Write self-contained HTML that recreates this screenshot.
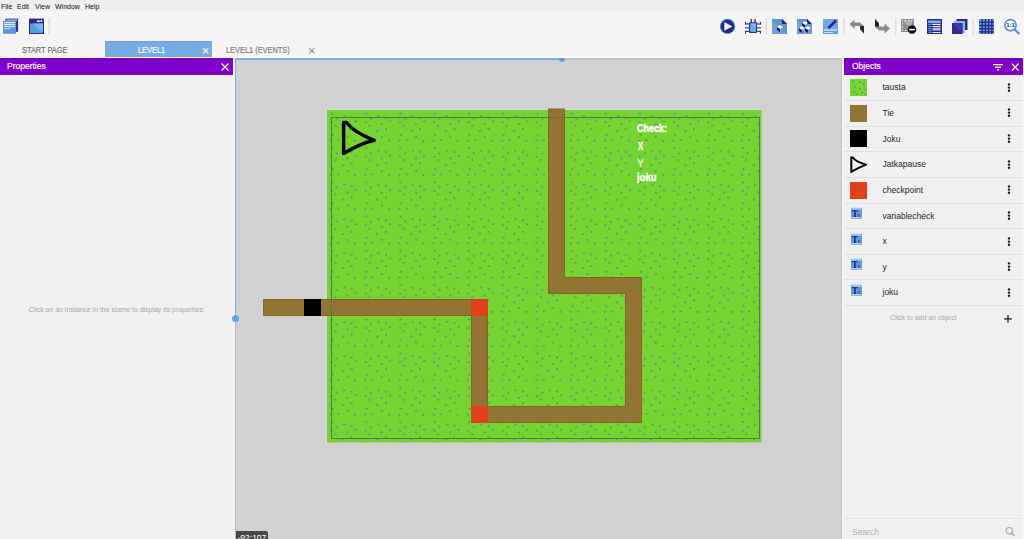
<!DOCTYPE html>
<html><head><meta charset="utf-8">
<style>
*{margin:0;padding:0;box-sizing:border-box}
html,body{width:1024px;height:539px;overflow:hidden;background:#f5f5f5;font-family:"Liberation Sans",sans-serif;position:relative}
.a{position:absolute}
.menu{left:0;top:0;width:1024px;height:11px;background:#eeeeee}
.menu span{position:absolute;top:1.7px;font-size:7px;color:#111;line-height:9px}
.toolbar{left:0;top:11px;width:1024px;height:31px;background:#f5f5f5}
.sep{position:absolute;width:1.5px;background:#dcdcdc}
.tab{position:absolute;top:41.8px;height:17px;font-size:8.6px;line-height:17px;color:#6a6a6a;transform:scaleX(0.86);transform-origin:0 0;white-space:nowrap;-webkit-text-stroke:0.15px currentColor}
.hdr{background:#7f00c8;color:#fff;font-size:8.5px;height:17px;line-height:14.8px;border-top:1px solid #7100c2;-webkit-text-stroke:0.15px #fff}
.panel{background:#f0f0f0}
.row{position:absolute;left:844px;width:179px;height:25.63px;border-bottom:1px solid #e0e0e0}
.row .nm{position:absolute;left:38.5px;top:0;font-size:8.5px;line-height:25px;color:#262626}
.row .th{position:absolute;left:6px;top:3.6px;width:17px;height:17px}
.dots{position:absolute;left:162.5px;top:7.4px;width:4px;height:10px;fill:#1a1a1a}
</style></head><body>
<div class="a menu">
<span style="left:1px">File</span><span style="left:17px">Edit</span><span style="left:35px">View</span><span style="left:55px">Window</span><span style="left:85px">Help</span>
</div>
<div class="a toolbar"></div>
<!-- left toolbar icons -->
<svg class="a" style="left:0;top:0" width="60" height="42" viewBox="0 0 60 42">
 <rect x="5.5" y="18.6" width="12.6" height="13.2" fill="#2a2a8a"/>
 <rect x="6.6" y="19.6" width="10.5" height="1" fill="#fff"/>
 <rect x="3" y="20.8" width="13.1" height="13" fill="#5a96d8"/>
 <rect x="4" y="22.2" width="11" height="1" fill="#fff"/>
 <rect x="4" y="24.2" width="11" height="1" fill="#fff"/>
 <rect x="4" y="26.2" width="11" height="1" fill="#dfeaf6"/>
 <rect x="4" y="28.2" width="6" height="1" fill="#c6d9ef"/>
 <rect x="29" y="18.6" width="15" height="15.4" fill="#2a2a8a"/>
 <rect x="30" y="23.5" width="13" height="9.5" fill="#5a9ade"/>
 <polygon points="33,23.5 43,23.5 43,33" fill="#7cb2ea"/>
 <rect x="37" y="20.5" width="3" height="1.4" fill="#fff"/>
 <circle cx="41.4" cy="21" r="1" fill="#fff"/>
 <rect x="48.5" y="18" width="1.5" height="16" fill="#dedede"/>
</svg>
<!-- tabs -->
<div class="tab" style="left:22px">START PAGE</div>
<div class="a" style="left:105px;top:41px;width:107px;height:16px;background:#77ace2;border-top:1px solid #68a2de"></div><div class="a" style="left:105px;top:56.8px;width:107px;height:1.2px;background:#6cc6e2"></div><div class="tab" style="left:138.3px;color:#fff">LEVEL1</div>
<svg class="a" style="left:202px;top:47px" width="8" height="8" viewBox="0 0 8 8"><path d="M1.2,1.2 L6.4,6.4 M6.4,1.2 L1.2,6.4" stroke="#fff" stroke-width="1.1"/></svg>
<div class="tab" style="left:226px;color:#777">LEVEL1 (EVENTS)</div>
<svg class="a" style="left:308px;top:47px" width="8" height="8" viewBox="0 0 8 8"><path d="M1.2,1.2 L6.4,6.4 M6.4,1.2 L1.2,6.4" stroke="#666" stroke-width="1"/></svg>

<!-- white line under tabs -->
<div class="a" style="left:0;top:56.5px;width:1024px;height:1.5px;background:#fff"></div>

<!-- properties panel -->
<div class="a panel" style="left:0;top:58px;width:233px;height:481px"></div>
<div class="a hdr" style="left:0;top:58px;width:233px;padding-left:7px">Properties</div>
<svg class="a" style="left:220px;top:62px" width="10" height="10" viewBox="0 0 10 10"><path d="M1.5,1.5 L8.5,8.5 M8.5,1.5 L1.5,8.5" stroke="#fff" stroke-width="1.3"/></svg>
<div class="a" style="left:28.6px;top:305px;font-size:6.95px;color:#a6a6a6;line-height:10px;white-space:nowrap">Click on an instance in the scene to display its properties</div>

<!-- canvas -->
<div class="a" style="left:235px;top:58px;width:606px;height:481px;background:#d1d1d1"></div><div class="a" style="left:841px;top:60px;width:1px;height:479px;background:#c7c7c7"></div>
<div class="a" style="left:235px;top:58px;width:327px;height:2px;background:#78aee6"></div>
<div class="a" style="left:562px;top:58px;width:280px;height:2px;background:#c2c2c2"></div>
<div class="a" style="left:234.5px;top:58px;width:1.6px;height:260px;background:#78aee6"></div>
<div class="a" style="left:234.5px;top:318px;width:1.6px;height:221px;background:#bdbdbd"></div>
<div class="a" style="left:231.7px;top:314.8px;width:7.2px;height:7.2px;border-radius:50%;background:#65a3e6"></div>
<div class="a" style="left:558.8px;top:58px;width:6.4px;height:3.8px;border-radius:0 0 3.2px 3.2px;background:#5d9fe6"></div>

<svg class="a" style="left:0;top:0" width="1024" height="539" viewBox="0 0 1024 539">
 <defs>
  <pattern id="tex" patternUnits="userSpaceOnUse" x="380" y="180" width="34.25" height="34.25">
   <rect width="34.25" height="34.25" fill="#76d430"/>
   <g fill="#4f8d8e"><rect x="19.4" y="1.6" width="2" height="1.6"/><rect x="4.9" y="5.4" width="2" height="1.6"/><rect x="24.2" y="6.6" width="2" height="1.6"/><rect x="31.7" y="4.0" width="2" height="1.6"/><rect x="9.1" y="9.2" width="2" height="1.6"/><rect x="19.0" y="10.1" width="2" height="1.6"/><rect x="0.8" y="11.8" width="2" height="1.6"/><rect x="22.8" y="13.5" width="2" height="1.6"/><rect x="4.9" y="16.8" width="2" height="1.6"/><rect x="30.5" y="18.8" width="2" height="1.6"/><rect x="19.9" y="22.5" width="2" height="1.6"/><rect x="0.8" y="24.7" width="2" height="1.6"/><rect x="8.1" y="28.4" width="2" height="1.6"/><rect x="18.4" y="28.2" width="2" height="1.6"/><rect x="25.8" y="27.9" width="2" height="1.6"/></g>
  </pattern>
 </defs>
 <rect x="326.5" y="109.5" width="435.5" height="333.5" fill="none" stroke="#dccfe8" stroke-width="1"/>
 <rect x="327" y="110" width="434.6" height="332.5" fill="url(#tex)"/>
 <!-- roads -->
 <path d="M548.5,109 H564.5 V277.5 H641.5 V422.5 H471.5 V315.5 H263.5 V299.5 H487.5 V406.5 H625.5 V293.5 H548.5 Z" fill="#927433" stroke="#8c6229" stroke-width="1"/>
 <rect x="304" y="299" width="17" height="17" fill="#000"/>
 <rect x="471" y="299" width="17" height="17" fill="#e0401a"/>
 <rect x="471" y="406" width="17" height="17" fill="#e0401a"/>
 <!-- window rect -->
 <rect x="331.5" y="117.5" width="428" height="321" fill="none" stroke="#527c44" stroke-width="1"/>
 <!-- triangle -->
 <path d="M343.6,122.5 L343.6,153.4 C352,148.5 362,143 374.3,140.3 C363,136 353,131 346.5,122.5 Z" fill="none" stroke="#000" stroke-width="3.5" stroke-linejoin="round"/>
</svg>
<div class="a" style="left:636.5px;top:122px;font-size:11px;font-weight:bold;color:#fff;line-height:12px;transform:scaleX(0.82);transform-origin:0 0;-webkit-text-stroke:0.4px #fff">Check:</div>
<div class="a" style="left:638.2px;top:140px;font-size:11px;font-weight:bold;color:#fff;line-height:12px;transform:scaleX(0.7);transform-origin:0 0;-webkit-text-stroke:0.4px #fff">X</div>
<div class="a" style="left:636.8px;top:156.5px;font-size:11.5px;color:#fff;line-height:12px">Y</div>
<div class="a" style="left:637px;top:171px;font-size:11px;font-weight:bold;color:#fff;line-height:12px;transform:scaleX(0.86);transform-origin:0 0;-webkit-text-stroke:0.3px #fff">joku</div>

<div class="a" style="left:236px;top:531px;width:31.5px;height:8px;background:#474747;border-top-right-radius:2px"></div>
<div class="a" style="left:237.5px;top:533px;font-size:8.5px;color:#fff;line-height:10px">-92:107</div>

<!-- objects panel -->
<div class="a panel" style="left:844px;top:58px;width:180px;height:481px"></div>
<div class="a hdr" style="left:844px;top:58px;width:179px;padding-left:8px">Objects</div>
<svg class="a" style="left:990px;top:60px" width="34" height="14" viewBox="0 0 34 14">
 <rect x="3" y="4" width="10" height="1.3" fill="#fff"/><rect x="5" y="6.6" width="6" height="1.3" fill="#fff"/><rect x="7" y="9.2" width="2" height="1.3" fill="#fff"/>
 <path d="M21.8,3.6 L28.6,10.6 M28.6,3.6 L21.8,10.6" stroke="#fff" stroke-width="1.3"/>
</svg>
<div class="a" style="left:1023px;top:58px;width:1px;height:481px;background:#f5f5f5"></div>
<!--ROWS-->
<div class="row" style="top:75.40px"><svg class="th" viewBox="0 0 17 17"><rect width="17" height="17" fill="#76d430"/><g fill="#4f8d8e"><rect x="2" y="1.5" width="1.6" height="1.3"/><rect x="9" y="2.5" width="1.6" height="1.3"/><rect x="13" y="4.5" width="1.6" height="1.3"/><rect x="4" y="7" width="1.6" height="1.3"/><rect x="9" y="9" width="1.6" height="1.3"/><rect x="14" y="10" width="1.6" height="1.3"/><rect x="3" y="12" width="1.6" height="1.3"/><rect x="11" y="13" width="1.6" height="1.3"/><rect x="6" y="14.5" width="1.6" height="1.3"/><rect x="14.5" y="15" width="1.6" height="1.3"/></g></svg><div class="nm">tausta</div><svg class="dots" viewBox="0 0 4 10"><circle cx="2" cy="1.4" r="1.2"/><circle cx="2" cy="4.6" r="1.2"/><circle cx="2" cy="7.8" r="1.2"/></svg></div>
<div class="row" style="top:101.03px"><div class="th" style="background:#927433"></div><div class="nm">Tie</div><svg class="dots" viewBox="0 0 4 10"><circle cx="2" cy="1.4" r="1.2"/><circle cx="2" cy="4.6" r="1.2"/><circle cx="2" cy="7.8" r="1.2"/></svg></div>
<div class="row" style="top:126.66px"><div class="th" style="background:#000"></div><div class="nm">Joku</div><svg class="dots" viewBox="0 0 4 10"><circle cx="2" cy="1.4" r="1.2"/><circle cx="2" cy="4.6" r="1.2"/><circle cx="2" cy="7.8" r="1.2"/></svg></div>
<div class="row" style="top:152.29px"><svg class="th" viewBox="0 0 17 17"><path d="M1.3,1.5 L1.3,15.9 C5,13.5 10,11 16,8.6 C10,7 5,4.5 2.8,1.5 Z" fill="none" stroke="#000" stroke-width="2"/></svg><div class="nm">Jatkapause</div><svg class="dots" viewBox="0 0 4 10"><circle cx="2" cy="1.4" r="1.2"/><circle cx="2" cy="4.6" r="1.2"/><circle cx="2" cy="7.8" r="1.2"/></svg></div>
<div class="row" style="top:177.92px"><div class="th" style="background:#e0401a"></div><div class="nm">checkpoint</div><svg class="dots" viewBox="0 0 4 10"><circle cx="2" cy="1.4" r="1.2"/><circle cx="2" cy="4.6" r="1.2"/><circle cx="2" cy="7.8" r="1.2"/></svg></div>
<div class="row" style="top:203.55px"><svg class="th" viewBox="0 0 17 17"><rect x="1" y="0.8" width="11" height="11" fill="#5e9edf"/><rect x="1.6" y="1.5" width="9.8" height="0.9" fill="#e8f0fa"/><rect x="1.6" y="10.2" width="9.8" height="0.9" fill="#cfe0f3"/><text x="1.8" y="9.6" font-family="Liberation Serif" font-weight="bold" font-size="9.5" fill="#1e1a78">T</text><text x="7.4" y="9.9" font-family="Liberation Sans" font-size="5.5" fill="#1e1a78">x</text></svg><div class="nm">variablecheck</div><svg class="dots" viewBox="0 0 4 10"><circle cx="2" cy="1.4" r="1.2"/><circle cx="2" cy="4.6" r="1.2"/><circle cx="2" cy="7.8" r="1.2"/></svg></div>
<div class="row" style="top:229.18px"><svg class="th" viewBox="0 0 17 17"><rect x="1" y="0.8" width="11" height="11" fill="#5e9edf"/><rect x="1.6" y="1.5" width="9.8" height="0.9" fill="#e8f0fa"/><rect x="1.6" y="10.2" width="9.8" height="0.9" fill="#cfe0f3"/><text x="1.8" y="9.6" font-family="Liberation Serif" font-weight="bold" font-size="9.5" fill="#1e1a78">T</text><text x="7.4" y="9.9" font-family="Liberation Sans" font-size="5.5" fill="#1e1a78">x</text></svg><div class="nm">x</div><svg class="dots" viewBox="0 0 4 10"><circle cx="2" cy="1.4" r="1.2"/><circle cx="2" cy="4.6" r="1.2"/><circle cx="2" cy="7.8" r="1.2"/></svg></div>
<div class="row" style="top:254.81px"><svg class="th" viewBox="0 0 17 17"><rect x="1" y="0.8" width="11" height="11" fill="#5e9edf"/><rect x="1.6" y="1.5" width="9.8" height="0.9" fill="#e8f0fa"/><rect x="1.6" y="10.2" width="9.8" height="0.9" fill="#cfe0f3"/><text x="1.8" y="9.6" font-family="Liberation Serif" font-weight="bold" font-size="9.5" fill="#1e1a78">T</text><text x="7.4" y="9.9" font-family="Liberation Sans" font-size="5.5" fill="#1e1a78">x</text></svg><div class="nm">y</div><svg class="dots" viewBox="0 0 4 10"><circle cx="2" cy="1.4" r="1.2"/><circle cx="2" cy="4.6" r="1.2"/><circle cx="2" cy="7.8" r="1.2"/></svg></div>
<div class="row" style="top:280.44px"><svg class="th" viewBox="0 0 17 17"><rect x="1" y="0.8" width="11" height="11" fill="#5e9edf"/><rect x="1.6" y="1.5" width="9.8" height="0.9" fill="#e8f0fa"/><rect x="1.6" y="10.2" width="9.8" height="0.9" fill="#cfe0f3"/><text x="1.8" y="9.6" font-family="Liberation Serif" font-weight="bold" font-size="9.5" fill="#1e1a78">T</text><text x="7.4" y="9.9" font-family="Liberation Sans" font-size="5.5" fill="#1e1a78">x</text></svg><div class="nm">joku</div><svg class="dots" viewBox="0 0 4 10"><circle cx="2" cy="1.4" r="1.2"/><circle cx="2" cy="4.6" r="1.2"/><circle cx="2" cy="7.8" r="1.2"/></svg></div>
<div class="a" style="left:844px;top:306.07px;width:180px;height:25.6px"><div class="a" style="left:46px;top:-0.6px;font-size:6.95px;line-height:25px;color:#ababab">Click to add an object</div><svg class="a" style="left:159.3px;top:8px" width="10" height="10" viewBox="0 0 10 10"><path d="M5,1.1 V8.7 M1.2,4.9 H8.8" stroke="#111" stroke-width="1.1"/></svg></div>
<div class="a" style="left:844px;top:518px;width:178px;height:1px;background:#e2e2e2"></div><div class="a" style="left:852px;top:526.5px;font-size:8.5px;color:#b0b0b0;line-height:10px">Search</div><svg class="a" style="left:1003px;top:525px" width="14" height="14" viewBox="0 0 14 14"><circle cx="6.3" cy="5.7" r="3.2" fill="none" stroke="#a8a8a8" stroke-width="1.2"/><path d="M8.6,8 L11.6,11" stroke="#a8a8a8" stroke-width="1.4"/></svg>
<!--/ROWS-->
<!-- toolbar right icons -->
<svg class="a" style="left:700px;top:10px" width="324" height="32" viewBox="700 10 324 32">
 <!-- play -->
 <circle cx="727.5" cy="26.4" r="7.7" fill="#3f8ee2"/>
 <circle cx="727.5" cy="26.4" r="6.7" fill="#2b2680"/>
 <path d="M724.3,22 L732.3,26.4 L724.3,30.8 Z" fill="#f0f0f4"/>
 <!-- bug -->
 <g fill="#2e2e8c">
  <rect x="749" y="22.3" width="8" height="10.7" rx="0.8"/>
  <rect x="750.6" y="18.9" width="1.3" height="3.8"/><rect x="754.4" y="18.9" width="1.3" height="3.8"/>
  <rect x="745" y="23.4" width="4" height="1.1"/><rect x="745" y="21.8" width="1.1" height="2.7"/>
  <rect x="757" y="23.4" width="4" height="1.1"/><rect x="759.9" y="21.8" width="1.1" height="2.7"/>
  <rect x="745" y="27.3" width="4" height="1.1"/><rect x="757" y="27.3" width="4" height="1.1"/>
  <rect x="745" y="30.8" width="4" height="1.1"/><rect x="745" y="30.8" width="1.1" height="2.8"/>
  <rect x="757" y="30.8" width="4" height="1.1"/><rect x="759.9" y="30.8" width="1.1" height="2.8"/>
 </g>
 <rect x="750.1" y="23.4" width="5.8" height="8.5" fill="#6aa8e6"/>
 <polygon points="750.1,23.4 755.9,23.4 755.9,29" fill="#7cb6ee"/>
 <rect x="765.5" y="18" width="1.5" height="17" fill="#dedede"/>
 <!-- icon 3 -->
 <rect x="772" y="19" width="15" height="15" fill="#5e93cf"/>
 <polygon points="772,19 787,34 772,34" fill="#6d9fd8"/>
 <polygon points="782,19 787,19 787,24" fill="#f5f5f5"/>
 <polygon points="782,19 787,24 782,24" fill="#1f1f78"/>
 <polygon points="777,27 780,25 783,27 780,29" fill="#fff"/>
 <polygon points="777,27 780,29 780,32 777,30" fill="#1a1a70"/>
 <!-- icon 4 -->
 <rect x="797" y="19" width="15" height="15" fill="#5e93cf"/>
 <polygon points="797,19 812,34 797,34" fill="#6d9fd8"/>
 <polygon points="807,19 812,19 812,24" fill="#f5f5f5"/>
 <polygon points="807,19 812,24 807,24" fill="#1f1f78"/>
 <polygon points="802,23 805,21 808,23 805,25" fill="#fff"/>
 <polygon points="802,23 805,25 805,28 802,26" fill="#1a1a70"/>
 <polygon points="799,28 802,26 805,28 802,30" fill="#fff"/>
 <polygon points="799,28 802,30 802,33 799,31" fill="#1a1a70"/>
 <polygon points="805,28 808,26 811,28 808,30" fill="#fff"/>
 <polygon points="805,28 808,30 808,33 805,31" fill="#1a1a70"/>
 <!-- icon 5 edit -->
 <rect x="823" y="19" width="15" height="15" fill="#5a9ee2"/>
 <polygon points="823,19 838,19 838,30 823,30" fill="#6eaae6"/>
 <path d="M828.5,28 L836,20.5" stroke="#2d2890" stroke-width="2.6"/>
 <rect x="824" y="29.5" width="13" height="1.3" fill="#dbe8f5"/>
 <rect x="824" y="32" width="9" height="0.9" fill="#dbe8f5"/>
 <rect x="843.2" y="18" width="1.5" height="17" fill="#dedede"/>
 <!-- undo -->
 <path d="M849.5,24 L854.5,19.5 L854.5,22.5 L860,22.5 L864,26 L864,33.5 L860,29 L860,26 L854.5,26 L854.5,29 Z" fill="#8a8a8a"/>
 <path d="M860,26 L864,26 L864,33.5 L860,29 Z" fill="#2a2a2a"/>
 <!-- redo -->
 <path d="M875,19 L879,23.5 L879,26.5 L884.5,26.5 L884.5,23.5 L890,28.5 L884.5,33.5 L884.5,30.5 L879,30.5 L875,27 Z" fill="#8a8a8a"/>
 <path d="M875,19 L879,23.5 L879,26.5 L875,26.5 Z" fill="#1f1f1f"/>
 <rect x="895" y="18" width="1.5" height="17" fill="#dedede"/>
 <!-- hide icon -->
 <rect x="901" y="19" width="13" height="13" fill="#8c8c8c"/>
 <polygon points="903,21 912,21 912,30" fill="#b0b0b0"/>
 <g fill="#f5f5f5"><rect x="902" y="20" width="1" height="1.2"/><rect x="904.5" y="20" width="1.5" height="1"/><rect x="908" y="20" width="1.5" height="1"/><rect x="911" y="20" width="1.5" height="1"/>
 <rect x="902" y="23" width="1" height="1.5"/><rect x="902" y="26" width="1" height="1.5"/><rect x="902" y="29" width="1" height="1.5"/><rect x="905" y="30" width="1.5" height="1"/></g>
 <circle cx="912" cy="29.5" r="4.3" fill="#111"/>
 <rect x="909.2" y="28.8" width="5.6" height="1.6" fill="#fff"/>
 <!-- table -->
 <rect x="927" y="19" width="15" height="15" fill="#2a2a88"/>
 <rect x="928.2" y="20.5" width="12.6" height="2.4" fill="#7cbaf0"/>
 <g fill="#5a96dc"><rect x="928.2" y="23.8" width="3.5" height="1.2"/><rect x="928.2" y="26" width="3.5" height="1.2"/><rect x="928.2" y="28" width="3.5" height="1.2"/><rect x="928.2" y="30" width="3.5" height="1.2"/><rect x="928.2" y="32" width="3.5" height="1"/></g>
 <g fill="#f0f0f8"><rect x="932.5" y="23.8" width="8" height="1.2"/><rect x="932.5" y="26" width="8" height="1.2"/><rect x="932.5" y="28" width="8" height="2.6" fill="#b8bedf"/><rect x="932.5" y="32" width="8" height="1"/></g>
 <!-- layers -->
 <rect x="956.5" y="19" width="11" height="11" fill="#2a2a88"/>
 <rect x="954" y="21" width="11" height="12" fill="#7cbaf0"/>
 <rect x="952" y="23" width="10.5" height="11" fill="#2e2a8e"/>
 <polygon points="952,23 962.5,23 962.5,34" fill="#3a3aa0"/>
 <rect x="972.5" y="18" width="1.5" height="17" fill="#dedede"/>
 <!-- grid -->
 <rect x="979" y="19" width="15" height="15" fill="#5aa6e6"/>
 <g fill="#2e2a8c"><rect x="979" y="21.5" width="15" height="1.4"/><rect x="979" y="24.8" width="15" height="1.4"/><rect x="979" y="28" width="15" height="1.4"/><rect x="979" y="31.2" width="15" height="1.4"/>
 <rect x="981.5" y="19" width="1.4" height="15"/><rect x="984.7" y="19" width="1.4" height="15"/><rect x="987.9" y="19" width="1.4" height="15"/><rect x="991.1" y="19" width="1.4" height="15"/></g>
 <!-- zoom 1:1 -->
 <circle cx="1010.5" cy="25.2" r="5.6" fill="#fff" stroke="#4a90dc" stroke-width="1.6"/>
 <path d="M1014.5,29.2 L1018.6,33.3" stroke="#4a90dc" stroke-width="2.2" stroke-linecap="round"/>
 <text x="1010.5" y="27.3" text-anchor="middle" font-family="Liberation Sans" font-weight="bold" font-size="6" fill="#1a1a6e">1:1</text>
</svg>
</body></html>
